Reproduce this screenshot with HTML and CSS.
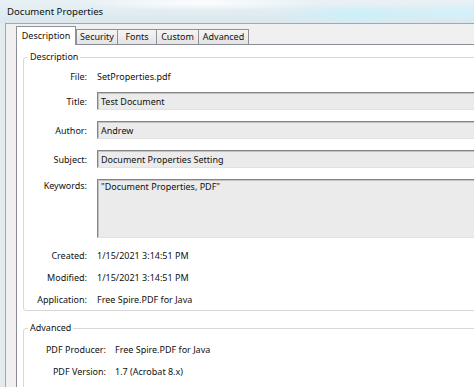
FILE: index.html
```html
<!DOCTYPE html>
<html>
<head>
<meta charset="utf-8">
<link rel="stylesheet" href="styles.css">
</head>
<body>
<div class="window">
  <div class="titlebar">Document Properties</div>
  <div class="client">
    <div class="tabs">
      <div class="tab tab--active tab--desc">Description</div>
      <div class="tab tab--security">Security</div>
      <div class="tab tab--fonts">Fonts</div>
      <div class="tab tab--custom">Custom</div>
      <div class="tab tab--advanced">Advanced</div>
    </div>
    <div class="panel">
      <fieldset class="group group--desc">
        <legend>Description</legend>
        <div class="row row--file"><span class="label">File:</span><span class="value">SetProperties.pdf</span></div>
        <div class="row row--field row--title"><span class="label">Title:</span><span class="field">Test Document</span></div>
        <div class="row row--field"><span class="label">Author:</span><span class="field">Andrew</span></div>
        <div class="row row--field"><span class="label">Subject:</span><span class="field">Document Properties Setting</span></div>
        <div class="row row--field row--keywords"><span class="label">Keywords:</span><span class="field field--multi">"Document Properties, PDF"</span></div>
        <div class="row row--created"><span class="label">Created:</span><span class="value">1/15/2021 3:14:51 PM</span></div>
        <div class="row"><span class="label">Modified:</span><span class="value">1/15/2021 3:14:51 PM</span></div>
        <div class="row"><span class="label">Application:</span><span class="value">Free Spire.PDF for Java</span></div>
      </fieldset>
      <fieldset class="group group--adv">
        <legend>Advanced</legend>
        <div class="row row--producer"><span class="label label--wide">PDF Producer:</span><span class="value">Free Spire.PDF for Java</span></div>
        <div class="row"><span class="label label--wide">PDF Version:</span><span class="value">1.7 (Acrobat 8.x)</span></div>
      </fieldset>
    </div>
  </div>
</div>
</body>
</html>
```
FILE: styles.css
```css
html, body {
  margin: 0;
  height: 100%;
  overflow: hidden;
}
body {
  background: #e4ebef;
  font-family: "Noto Sans", "Segoe UI", sans-serif;
  font-size: 9px;
  color: #111;
}
.window {
  width: 100%;
  height: 100%;
  overflow: hidden;
}
.titlebar {
  height: 23px;
  line-height: 23px;
  padding-left: 7px;
  font-size: 9.6px;
  color: #0e0e0e;
  background:
    radial-gradient(ellipse 90px 10px at 360px 14px, rgba(200, 240, 250, 0.95), rgba(200, 240, 250, 0)),
    radial-gradient(ellipse 70px 9px at 460px 12px, rgba(205, 242, 252, 0.85), rgba(205, 242, 252, 0)),
    radial-gradient(ellipse 120px 8px at 200px 3px, rgba(255, 255, 255, 0.9), rgba(255, 255, 255, 0)),
    linear-gradient(#e9f1f5, #dae8ef);
}
.client {
  width: 640px;
  margin-left: 5px;
  height: 364px;
  border-top: 1px solid #a2a8ac;
  border-left: 1px solid #a2a8ac;
  background: #f0f0f0;
}
.tabs {
  display: flex;
  align-items: flex-end;
  height: 20px;
  padding-left: 10px;
}
.tab {
  box-sizing: border-box;
  height: 15px;
  line-height: 13px;
  text-align: center;
  border-top: 1px solid #8e9297;
  border-left: 1px solid #8e9297;
  background: linear-gradient(#f5f5f5, #e3e3e3);
}
.tab--active {
  position: relative;
  z-index: 1;
  height: 19px;
  line-height: 17px;
  margin-bottom: -1px;
  border-right: 1px solid #8e9297;
  background: #fff;
}
.tab--desc { width: 60px; }
.tab--security { width: 41px; }
.tab--fonts { width: 39px; }
.tab--custom { width: 42px; }
.tab--advanced { width: 51px; border-right: 1px solid #8e9297; }
.panel {
  margin-left: 10px;
  height: 357px;
  box-sizing: border-box;
  padding: 6px 0 0 6px;
  border-top: 1px solid #898c95;
  border-left: 1px solid #898c95;
  background: #fff;
}
.group {
  margin: 0;
  padding: 0;
  min-width: 0;
  border: 1px solid #d8d8d8;
  border-radius: 3px;
}
.group legend {
  margin-left: 4px;
  padding: 0 2px;
  line-height: 12px;
}
.group--adv {
  margin-top: 11px;
  padding-bottom: 12px;
}
.row {
  display: flex;
  align-items: center;
  height: 22px;
}
.label {
  flex: none;
  width: 63px;
  margin-right: 10px;
  text-align: right;
}
.label--wide {
  width: 82px;
  margin-right: 9px;
}
.row--file { margin-top: 2px; }
.row--field {
  height: 18px;
  margin-top: 11px;
}
.row--title { margin-top: 5px; }
.field {
  flex: 1;
  align-self: stretch;
  display: flex;
  align-items: center;
  box-sizing: border-box;
  padding-left: 3px;
  border-top: 1px solid #858585;
  border-left: 1px solid #858585;
  border-bottom: 1px solid #e2e2e2;
  background: #ebebeb;
  box-shadow: inset 1px 1px 0 #c2c2c2;
}
.row--keywords {
  height: 59px;
  align-items: flex-start;
}
.row--keywords .label {
  line-height: 14px;
}
.field--multi {
  display: block;
  line-height: 14px;
}
.row--created { margin-top: 6px; }
.row--producer { margin-top: 4px; }
```
